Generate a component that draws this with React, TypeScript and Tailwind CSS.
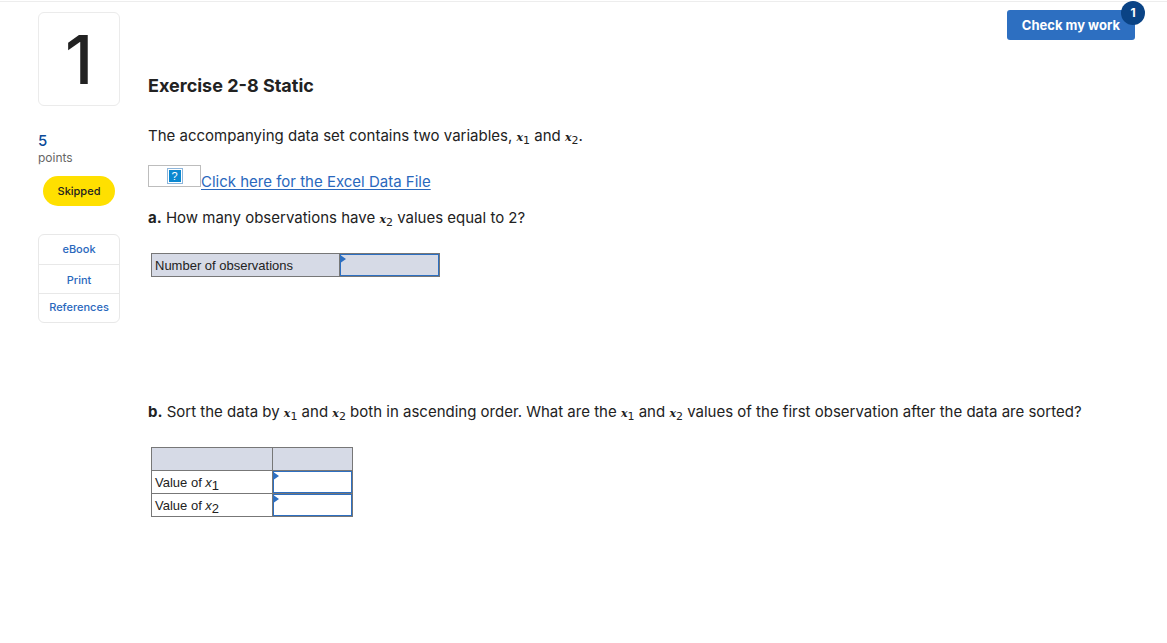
import type { ReactNode } from "react";

const sideLinks = [
  { name: "eBook", size: "h-[30px] pb-0.5" },
  { name: "Print", size: "h-[29px] pt-0.5" },
  { name: "References", size: "h-7 pb-0.5" },
];

// Math style variable with an index, e.g. x1
const Variable = ({ index }: { index: number }) => (
  <span className="whitespace-nowrap leading-none">
    <i className="font-['DejaVu_Serif',serif] text-[11px] font-bold leading-none">x</i>
    <sub className="font-['DejaVu_Sans',sans-serif] text-[11px]">{index}</sub>
  </span>
);

const AnswerCell = ({ id, className }: { id: string; className: string }) => (
  <td className="relative border border-[#777] p-0">
    <input
      id={id}
      type="text"
      className={`block h-[22px] border border-[#2d6fc1] px-2 outline-none ${className}`}
    />
    {/* Marker in the corner of an editable cell */}
    <svg
      viewBox="0 0 6 8"
      className="pointer-events-none absolute left-0 top-0 h-[9px] w-1.5"
      fill="#2d6fc1"
    >
      <path d="M0 0 L1 1 L6 4.5 L1 8 L0 8 Z" />
    </svg>
  </td>
);

const LabelCell = ({ id, className, children }: { id: string; className: string; children: ReactNode }) => (
  <td className={`border border-[#777] p-0 px-[3px] ${className}`}>
    <label htmlFor={id} className="block h-[22px] leading-6">
      {children}
    </label>
  </td>
);

const Sidebar = () => (
  <aside className="w-[82px] shrink-0 pt-2.5">
    <div className="flex h-[94px] items-center justify-center rounded-md border border-[#ebebeb] text-[68px] font-medium leading-none">
      1
    </div>

    <div className="mt-[27px] text-[15px] leading-4">
      <p className="font-medium text-[#0b4a99]">5</p>
      <p className="mt-px text-xs leading-4 text-[#666]">points</p>
    </div>

    <div className="mx-auto mt-2.5 flex h-[30px] w-[72px] items-center justify-center rounded-full bg-[#ffe000] text-[11px] font-medium">
      Skipped
    </div>

    <nav className="mt-7 rounded-md border border-[#e8e8e8]">
      {sideLinks.map((item) => (
        <a
          key={item.name}
          href="#"
          className={`flex items-center justify-center border-b border-[#e8e8e8] text-[11px] font-medium text-[#2a68bd] last:border-b-0 ${item.size}`}
        >
          {item.name}
        </a>
      ))}
    </nav>
  </aside>
);

const App = () => {
  return (
    <div className="pt-px font-['Inter',sans-serif] text-[15px] leading-6 text-[#222]">
      <div className="flex items-start gap-7 border-t border-[#ededed] pl-[38px] pr-8">
        <Sidebar />

        <main className="min-w-0 flex-1">
          <div className="flex justify-end pt-2">
            <button className="relative h-[30px] rounded-[3px] bg-[#2d6fc1] px-[15px] text-[13px] font-bold text-white">
              Check my work
              <span className="absolute -right-2.5 -top-[9px] flex size-6 items-center justify-center rounded-full bg-[#0a4385] text-xs">
                1
              </span>
            </button>
          </div>

          <h1 className="mt-8 text-lg font-bold leading-7">Exercise 2-8 Static</h1>

          <p className="mt-6">
            The accompanying data set contains two variables, <Variable index={1} /> and{" "}
            <Variable index={2} />.
          </p>

          <div className="mt-[17px] flex items-start">
            {/* Missing image placeholder */}
            <div className="flex h-[22px] w-[53px] items-center justify-center border border-[#bdbdbd]">
              <span className="flex size-4 items-center justify-center border border-[#8db6dc] bg-[#0c88d0] font-['Liberation_Sans',sans-serif] text-[11px] leading-none text-white outline-1 -outline-offset-2 outline-white">
                ?
              </span>
            </div>
            <a href="#" className="pt-[5px] text-[#2a68bd] underline underline-offset-2">
              Click here for the Excel Data File
            </a>
          </div>

          <p className="mt-3">
            <b>a.</b> How many observations have <Variable index={2} /> values equal to 2?
          </p>

          <table className="ml-[3px] mt-[23px] border-collapse bg-[#d6dae6] font-['Liberation_Sans',sans-serif] text-[13px]">
            <tbody>
              <tr>
                <LabelCell id="observations" className="w-[188px]">
                  Number of observations
                </LabelCell>
                <AnswerCell id="observations" className="w-[99px]" />
              </tr>
            </tbody>
          </table>

          <p className="mt-[123px]">
            <b>b.</b> Sort the data by <Variable index={1} /> and <Variable index={2} /> both in
            ascending order. What are the <Variable index={1} /> and <Variable index={2} /> values
            of the first observation after the data are sorted?
          </p>

          <table className="mb-8 ml-[3px] mt-[23px] border-collapse font-['Liberation_Sans',sans-serif] text-[13px]">
            <thead>
              <tr className="h-[23px] bg-[#d6dae6]">
                <th className="border border-[#777] p-0" />
                <th className="border border-[#777] p-0" />
              </tr>
            </thead>
            <tbody>
              {[1, 2].map((n) => (
                <tr key={n}>
                  <LabelCell id={`value-x${n}`} className="w-[121px]">
                    Value of <i>x</i>
                    <sub className="text-[13px]">{n}</sub>
                  </LabelCell>
                  <AnswerCell id={`value-x${n}`} className="w-[79px]" />
                </tr>
              ))}
            </tbody>
          </table>
        </main>
      </div>
    </div>
  );
};

export default App;
